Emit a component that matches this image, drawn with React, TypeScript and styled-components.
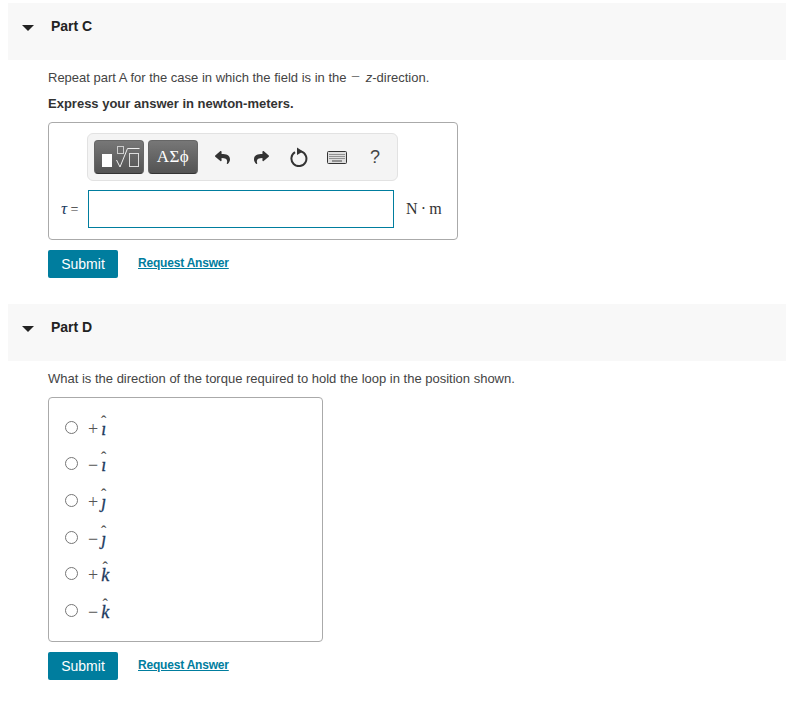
import React from "react";
import styled, { createGlobalStyle } from "styled-components";
import { FaReply, FaShare } from "react-icons/fa";

const Global = createGlobalStyle`
  html, body { margin: 0; padding: 0; background: #fff; }
  body { font-family: "Liberation Sans", Arial, sans-serif; color: #333; width: 786px; height: 706px; overflow: hidden; }
`;

const Page = styled.div`
  padding: 3px 0 0 8px;
  display: flex;
  flex-direction: column;
`;

const Section = styled.section<{ $height: number }>`
  height: ${(p) => p.$height}px;
  display: flex;
  flex-direction: column;
`;

const Header = styled.header`
  height: 57px;
  flex: none;
  background: #f8f8f8;
  display: flex;
  align-items: flex-start;
  padding: 15px 0 0 14px;
  box-sizing: border-box;
  gap: 17px;
`;

const Triangle = styled.span`
  margin-top: 7px;
  width: 0;
  height: 0;
  border-left: 6px solid transparent;
  border-right: 6px solid transparent;
  border-top: 6px solid #222;
`;

const Title = styled.h2`
  margin: 0;
  font-size: 14px;
  line-height: 16px;
  font-weight: 700;
  color: #222;
`;

const Body = styled.div`
  padding-left: 40px;
  display: flex;
  flex-direction: column;
  align-items: flex-start;
`;

const Prompt = styled.p<{ $top: number }>`
  margin: ${(p) => p.$top}px 0 0;
  font-size: 13px;
  line-height: 16px;
  color: #444;
`;

const MinusSign = styled.span`
  font-family: "Liberation Serif", serif;
  font-size: 16px;
  line-height: 14px;
  color: #666;
  margin: 0 2px 0 1px;
`;

const Instruction = styled.p`
  margin: 10px 0 0;
  font-size: 13px;
  line-height: 16px;
  font-weight: 700;
  color: #333;
`;

const AnswerCard = styled.div`
  margin-top: 10px;
  width: 410px;
  height: 118px;
  box-sizing: border-box;
  border: 1px solid #aaa;
  border-radius: 4px;
  padding: 10px 0 0 38px;
  display: flex;
  flex-direction: column;
`;

const Toolbar = styled.div`
  width: 311px;
  height: 48px;
  box-sizing: border-box;
  background: #f4f4f4;
  border: 1px solid #e2e2e2;
  border-radius: 6px;
  display: flex;
  align-items: center;
  padding: 0 0 0 6px;
`;

const MathButton = styled.div<{ $width: number }>`
  width: ${(p) => p.$width}px;
  height: 34px;
  margin-right: 4px;
  box-sizing: border-box;
  border-radius: 4px;
  border: 1px solid #666;
  border-bottom-color: #333;
  background: linear-gradient(#777, #535353);
  color: #fff;
  display: flex;
  align-items: center;
  justify-content: center;
  font-family: "Liberation Serif", serif;
  font-size: 17px;
  letter-spacing: 0.5px;
`;

const ToolIcon = styled.span<{ $width: number }>`
  width: ${(p) => p.$width}px;
  display: flex;
  justify-content: center;
  align-items: center;
  color: #333;
  font-size: 18px;
`;

const HelpMark = styled(ToolIcon)`
  color: #444;
`;

const InputRow = styled.div`
  margin: 9px 0 0 -26px;
  display: flex;
  align-items: center;
`;

const Tau = styled.span`
  width: 27px;
  flex: none;
  font-family: "Liberation Serif", serif;
  font-size: 14px;
  color: #333;
  white-space: nowrap;
  i { font-style: italic; font-size: 17px; color: #1c3a5e; }
`;

const AnswerInput = styled.div`
  width: 306px;
  height: 38px;
  box-sizing: border-box;
  border: 1px solid #007d9e;
  background: #fff;
`;

const Units = styled.span`
  margin-left: 12px;
  font-family: "Liberation Serif", serif;
  font-size: 16px;
  color: #333;
  white-space: nowrap;
`;

const Actions = styled.div<{ $top: number }>`
  margin-top: ${(p) => p.$top}px;
  display: flex;
  align-items: flex-start;
  gap: 20px;
`;

const SubmitButton = styled.button`
  width: 70px;
  height: 28px;
  padding: 0;
  border: 0;
  border-radius: 2px;
  background: #007d9e;
  color: #fff;
  font-family: "Liberation Sans", Arial, sans-serif;
  font-size: 14px;
`;

const RequestLink = styled.a`
  font-size: 12px;
  letter-spacing: -0.2px;
  line-height: 14px;
  margin-top: 6px;
  font-weight: 700;
  color: #007d9e;
  text-decoration: underline;
`;

const ChoiceCard = styled.div`
  margin-top: 10px;
  width: 275px;
  height: 245px;
  box-sizing: border-box;
  border: 1px solid #aaa;
  border-radius: 4px;
  padding: 11px 0 0 16px;
  display: flex;
  flex-direction: column;
`;

const Choice = styled.label`
  height: 36.6px;
  display: flex;
  align-items: center;
  gap: 10px;
`;

const Radio = styled.input`
  appearance: none;
  margin: 0;
  width: 13px;
  height: 13px;
  border: 1px solid #767676;
  border-radius: 50%;
  background: #fff;
  flex: none;
`;

const MathText = styled.span`
  font-family: "Liberation Serif", serif;
  font-size: 18px;
  line-height: 20px;
  color: #555;
  display: inline-flex;
  align-items: baseline;
  gap: 3px;
  margin-top: 3px;
`;

const Hatted = styled.span`
  position: relative;
  display: inline-block;
  font-style: italic;
  color: #1c3a5e;
  -webkit-text-stroke: 0.3px #1c3a5e;
  &::before {
    content: "ˆ";
    position: absolute;
    left: 50%;
    top: -7px;
    transform: translateX(-50%);
    font-style: normal;
    font-size: 16px;
    color: #444;
    -webkit-text-stroke: 0;
  }
`;

const Dotless = { i: "ı", j: "ȷ", k: "k" } as const;

const choices: { sign: string; v: keyof typeof Dotless }[] = [
  { sign: "+", v: "i" },
  { sign: "−", v: "i" },
  { sign: "+", v: "j" },
  { sign: "−", v: "j" },
  { sign: "+", v: "k" },
  { sign: "−", v: "k" },
];

const TemplateIcon = () => (
  <svg width="44" height="24" viewBox="0 0 44 24" fill="none">
    <rect x="5" y="9" width="10" height="13" fill="#fff" />
    <rect x="20.5" y="1.5" width="6" height="7" stroke="#ccc" strokeWidth="1" />
    <path d="M19.5 15l3.5 7 7.5-18.5h12" stroke="#eee" strokeWidth="1" />
    <rect x="32.5" y="8.5" width="9" height="13" stroke="#ddd" strokeWidth="1" />
  </svg>
);

const ResetIcon = () => (
  <svg width="18" height="20" viewBox="0 0 18 20" fill="none">
    <path d="M5 5.2A7.5 7.5 0 1 0 11 4.4" stroke="#333" strokeWidth="2" />
    <path d="M7 0.5l6 4-6 3.5z" fill="#333" />
  </svg>
);

const KeyboardIcon = () => (
  <svg width="20" height="13" viewBox="0 0 20 13" fill="none">
    <rect x="0.5" y="0.5" width="19" height="12" rx="1" fill="#ddd" stroke="#333" />
    <path d="M2.5 3.5h15M2.5 5.5h15M2.5 7.5h15" stroke="#444" strokeDasharray="1 1" />
    <path d="M5 10h10" stroke="#444" />
  </svg>
);

export default function App() {
  return (
    <Page>
      <Global />
      <Section $height={301}>
        <Header>
          <Triangle />
          <Title>Part C</Title>
        </Header>
        <Body>
          <Prompt $top={10}>
            Repeat part A for the case in which the field is in the <MinusSign>−</MinusSign> <i>z</i>-direction.
          </Prompt>
          <Instruction>Express your answer in newton-meters.</Instruction>
          <AnswerCard>
            <Toolbar>
              <MathButton $width={50}>
                <TemplateIcon />
              </MathButton>
              <MathButton $width={50}>ΑΣϕ</MathButton>
              <ToolIcon $width={40}><FaReply size={15} /></ToolIcon>
              <ToolIcon $width={38}><FaShare size={15} /></ToolIcon>
              <ToolIcon $width={38}><ResetIcon /></ToolIcon>
              <ToolIcon $width={38}><KeyboardIcon /></ToolIcon>
              <HelpMark $width={38}>?</HelpMark>
            </Toolbar>
            <InputRow>
              <Tau><i>τ</i> =</Tau>
              <AnswerInput />
              <Units>N{"\u2009"}·{"\u2009"}m</Units>
            </InputRow>
          </AnswerCard>
          <Actions $top={10}>
            <SubmitButton>Submit</SubmitButton>
            <RequestLink>Request Answer</RequestLink>
          </Actions>
        </Body>
      </Section>
      <Section $height={400}>
        <Header>
          <Triangle />
          <Title>Part D</Title>
        </Header>
        <Body>
          <Prompt $top={10}>What is the direction of the torque required to hold the loop in the position shown.</Prompt>
          <ChoiceCard>
            {choices.map((c, i) => (
              <Choice key={i}>
                <Radio type="radio" name="direction" />
                <MathText>
                  {c.sign}
                  <Hatted>{Dotless[c.v]}</Hatted>
                </MathText>
              </Choice>
            ))}
          </ChoiceCard>
          <Actions $top={10}>
            <SubmitButton>Submit</SubmitButton>
            <RequestLink>Request Answer</RequestLink>
          </Actions>
        </Body>
      </Section>
    </Page>
  );
}
